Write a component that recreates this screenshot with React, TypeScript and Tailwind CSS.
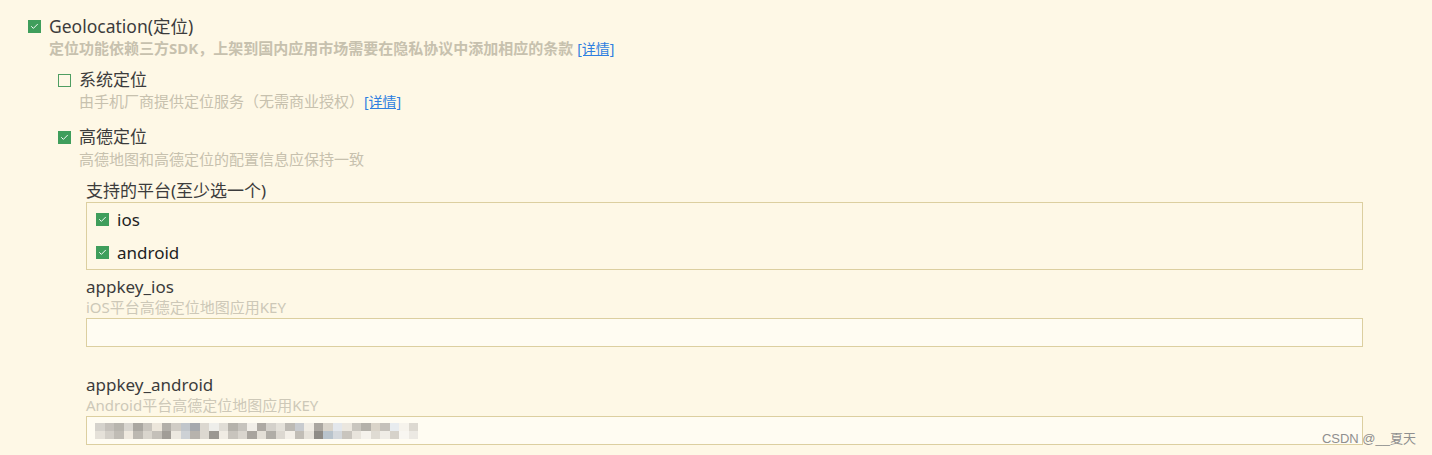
import { Check } from "lucide-react";

const font = { fontFamily: '"Noto Sans", "Noto Sans CJK SC", sans-serif' };

function Box({ checked }: { checked: boolean }) {
  return checked ? (
    <span className="flex h-[13px] w-[13px] shrink-0 items-center justify-center bg-[#3f9e5c]">
      <Check className="h-[9px] w-[9px] text-white" strokeWidth={2.5} />
    </span>
  ) : (
    <span className="h-[13px] w-[13px] shrink-0 border border-[#4f9e62] bg-transparent" />
  );
}

const blurTop = ["#d5d2cc", "#c5c1bb", "#b8b5ae", "#d9d6d0", "#aaa7a1", "#c9c5be", "#ece6db", "#b2afa9", "#d0ccc5", "#c1c6cb", "#a6a9ad", "#dcd8d0", "#eeeeea", "#e0ddd6", "#b5b2ab", "#c6c3bd", "#f1eee8", "#ada9a3", "#d4d1cb", "#e4e1da", "#bdbab4", "#c8cbcf", "#f0ece4", "#aaa6a0", "#d9d4cb", "#e3e7ec", "#ebe7df", "#c9c6bf", "#b4b1aa", "#dad4c9", "#c5c1bb", "#e8ecef", "#f6f3ec", "#ddd9d1"];
const blurBot = ["#e5e1d9", "#d3cfc8", "#c0bcb5", "#efe9df", "#bcb8b1", "#d9d5cd", "#c4c0b9", "#a19d97", "#ece8e0", "#cdd1d5", "#b7b3ad", "#dcd8d0", "#9b9892", "#f0ece4", "#c8c4bd", "#d9d5ce", "#a8a49e", "#e3dfd7", "#b0ada7", "#dcd8d1", "#f3efe8", "#c1bdb6", "#e6e2da", "#8e8b86", "#b8c3cc", "#d4d8dc", "#c9c5be", "#e8e4dc", "#f5f2ec", "#dfdbd3", "#efece6", "#d6d2ca", "#f8f6f1", "#ece9e3"];

export default function App() {
  return (
    <div className="relative h-[455px] w-[1432px] overflow-hidden bg-[#fef8e6] text-[#3c3c3c]" style={font}>
      <div className="pl-[28px] pt-[15px]">
        <div className="flex h-[22px] items-center gap-[8px]">
          <Box checked />
          <span className="text-[17.5px]">Geolocation(定位)</span>
        </div>
        <div className="ml-[21px] flex h-[22px] items-center gap-[4px] text-[15px] font-bold text-[#c7c1ae]">
          <span>定位功能依赖三方SDK，上架到国内应用市场需要在隐私协议中添加相应的条款</span>
          <span className="text-[14px] font-normal text-[#2f7fe0] underline">[详情]</span>
        </div>

        <div className="ml-[30px] mt-[10px]">
          <div className="flex h-[22px] items-center gap-[8px]">
            <Box checked={false} />
            <span className="text-[17px]">系统定位</span>
          </div>
          <div className="ml-[21px] flex h-[21px] items-center text-[15px] text-[#c7c1ae]">
            <span>由手机厂商提供定位服务（无需商业授权）</span>
            <span className="text-[14px] text-[#2f7fe0] underline">[详情]</span>
          </div>

          <div className="mt-[14px] flex h-[22px] items-center gap-[8px]">
            <Box checked />
            <span className="text-[17px]">高德定位</span>
          </div>
          <div className="ml-[21px] flex h-[22px] items-center text-[15px] text-[#c7c1ae]">
            高德地图和高德定位的配置信息应保持一致
          </div>

          <div className="ml-[28px] mt-[9px] w-[1277px]">
            <div className="flex h-[23px] items-center text-[17px]">支持的平台(至少选一个)</div>
            <div className="flex h-[68px] flex-col justify-center gap-[11px] border border-[#dccfa0] pl-[9px]">
              <div className="flex h-[22px] items-center gap-[8px]">
                <Box checked />
                <span className="text-[17px] text-[#222]">ios</span>
              </div>
              <div className="flex h-[22px] items-center gap-[8px]">
                <Box checked />
                <span className="text-[17px] text-[#222]">android</span>
              </div>
            </div>

            <div className="mt-[6px] flex h-[21px] items-center text-[17px]">appkey_ios</div>
            <div className="flex h-[21px] items-center text-[15px] text-[#cdc8b8]">iOS平台高德定位地图应用KEY</div>
            <div className="h-[29px] border border-[#dccfa0] bg-[#fffcf2]" />

            <div className="mt-[27px] flex h-[21px] items-center text-[17px]">appkey_android</div>
            <div className="flex h-[21px] items-center text-[15px] text-[#cdc8b8]">Android平台高德定位地图应用KEY</div>
            <div className="flex h-[29px] flex-col justify-center border border-[#dccfa0] bg-[#fffcf2] pl-[8px]">
              <div className="flex h-[8px]">
                {blurTop.map((c, i) => (
                  <span key={i} className="h-[8px] w-[9.5px]" style={{ backgroundColor: c }} />
                ))}
              </div>
              <div className="flex h-[8px]">
                {blurBot.map((c, i) => (
                  <span key={i} className="h-[8px] w-[9.5px]" style={{ backgroundColor: c }} />
                ))}
              </div>
            </div>
          </div>
        </div>
      </div>
      <div
        className="absolute bottom-[7px] right-[16px] text-[13px] text-[#8f8f8f]"
        style={{ fontFamily: '"Liberation Sans", "Noto Sans CJK SC", sans-serif' }}
      >
        CSDN @__夏天
      </div>
    </div>
  );
}
